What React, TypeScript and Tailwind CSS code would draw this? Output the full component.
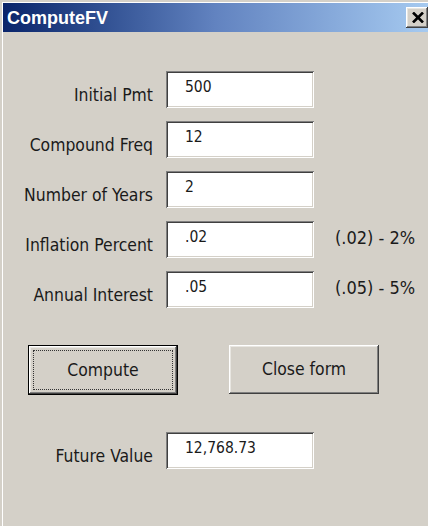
const uiFont = { fontFamily: '"DejaVu Sans Condensed", "DejaVu Sans", sans-serif' }

const sunken =
  'shadow-[inset_1px_1px_0_#808080,inset_-1px_-1px_0_#ffffff,inset_2px_2px_0_#404040,inset_-2px_-2px_0_#d4d0c8]'
const raised =
  'shadow-[inset_-1px_-1px_0_#404040,inset_1px_1px_0_#ffffff,inset_-2px_-2px_0_#808080,inset_2px_2px_0_#e8e6e1]'

function Field({ label, value, note }: { label: string; value: string; note?: string }) {
  return (
    <div className="flex h-[37px]">
      <div className="w-[150px] pt-[15px] text-right text-[17.4px] leading-[18px] whitespace-nowrap text-[#1a1a1a]">
        {label}
      </div>
      <div className={`ml-[13px] h-[37px] w-[148px] bg-white pl-[19px] pt-[8px] text-[15.5px] leading-[16px] text-[#1a1a1a] ${sunken}`}>
        {value}
      </div>
      {note && (
        <div className="ml-[21px] pt-[8px] text-[18px] leading-[18px] whitespace-nowrap text-[#1a1a1a]">{note}</div>
      )}
    </div>
  )
}

export default function App() {
  return (
    <div className="h-[526px] w-[428px] overflow-hidden bg-[#d4d0c8] pl-[2px] pt-[2px]" style={uiFont}>
      <div className="flex h-full flex-col border-l border-t border-white">
        {/* title bar */}
        <div className="flex h-[29px] items-center justify-between bg-linear-to-r from-[#0a246a] via-[#6283c0] to-[#a6caf0] pl-[4px]">
          <span
            className="text-[18px] font-bold leading-none text-white"
            style={{ fontFamily: '"Liberation Sans", Arial, sans-serif' }}
          >
            ComputeFV
          </span>
          <div className={`flex h-[21px] w-[22px] items-center justify-center bg-[#d4d0c8] pl-[1px] ${raised}`}>
            <svg width="12" height="11" viewBox="0 0 12 11">
              <path d="M1 0.5 L11 10.5 M11 0.5 L1 10.5" stroke="#000" strokeWidth="2.6" />
            </svg>
          </div>
        </div>

        <div className="flex flex-col gap-[13px] pt-[39px]">
          <Field label="Initial Pmt" value="500" />
          <Field label="Compound Freq" value="12" />
          <Field label="Number of Years" value="2" />
          <Field label="Inflation Percent" value=".02" note="(.02) - 2%" />
          <Field label="Annual Interest" value=".05" note="(.05) - 5%" />
        </div>

        {/* buttons */}
        <div className="mt-[37px] flex pl-[25px]">
          <div className="h-[50px] w-[150px] border border-black">
            <div className={`flex h-full w-full items-center justify-center p-[4px] ${raised}`}>
              <div className="flex h-full w-full items-center justify-center border border-dotted border-[#333] text-[17.4px] text-[#1a1a1a]">
                Compute
              </div>
            </div>
          </div>
          <div
            className={`ml-[51px] flex h-[49px] w-[150px] items-center justify-center text-[17.4px] text-[#1a1a1a] ${raised}`}
          >
            Close form
          </div>
        </div>

        <div className="mt-[37px]">
          <Field label="Future Value" value="12,768.73" />
        </div>
      </div>
    </div>
  )
}
